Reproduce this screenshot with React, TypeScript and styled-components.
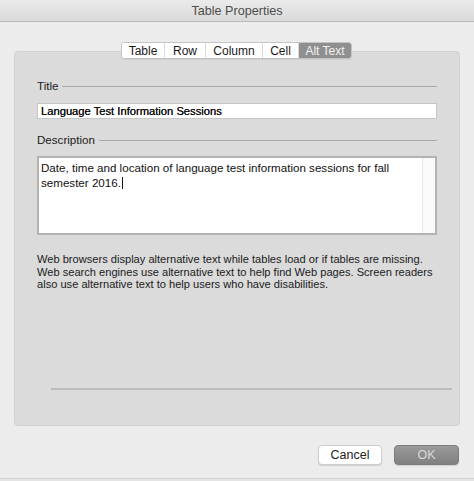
import React from "react";
import styled, { createGlobalStyle } from "styled-components";

const Global = createGlobalStyle`
  html, body { margin: 0; padding: 0; }
  body {
    width: 474px;
    height: 481px;
    overflow: hidden;
    background: #e4e4e4;
    font-family: "Liberation Sans", Arial, sans-serif;
    color: #222;
  }
`;

const Window = styled.div`
  width: 474px;
  height: 478px;
  background: #ececec;
  display: flex;
  flex-direction: column;
  border-bottom: 1px solid #cfcfcf;
`;

const TitleBar = styled.div`
  height: 21px;
  flex: none;
  background: linear-gradient(#ebebeb, #d9d9d9);
  border-bottom: 1px solid #b9b9b9;
  display: flex;
  align-items: center;
  justify-content: center;
  font-size: 12.6px;
  color: #4d4d4d;
`;

const Body = styled.div`
  flex: 1;
  display: flex;
  flex-direction: column;
  padding: 20px 14px 0 14px;
`;

const Tabs = styled.div`
  align-self: flex-start;
  margin-left: 107px;
  display: flex;
  height: 15px;
  border: 1px solid #c4c4c4;
  border-radius: 3px;
  background: #fff;
  overflow: hidden;
  position: relative;
  z-index: 1;
  margin-bottom: -8px;
  box-shadow: 0 1px 0 rgba(0, 0, 0, 0.06);
`;

const Tab = styled.div<{ $w: number; $active?: boolean }>`
  width: ${(p) => p.$w}px;
  box-sizing: border-box;
  display: flex;
  align-items: center;
  justify-content: center;
  font-size: 12px;
  color: ${(p) => (p.$active ? "#f2f2f2" : "#1a1a1a")};
  background: ${(p) => (p.$active ? "#8f8f8f" : "#fff")};
  border-left: 1px solid #dadada;
  &:first-child { border-left: none; }
`;

const Panel = styled.div`
  height: 375px;
  flex: none;
  box-sizing: border-box;
  background: #dbdbdb;
  border: 1px solid #d2d2d2;
  border-radius: 4px;
  padding: 26px 22px 35px 22px;
  display: flex;
  flex-direction: column;
`;

const LabelRow = styled.div`
  display: flex;
  align-items: center;
  gap: 4px;
  height: 14px;
  font-size: 11.6px;
  color: #1a1a1a;
`;

const Rule = styled.div`
  flex: 1;
  height: 1px;
  background: #a9a9a9;
  margin-top: 3px;
`;

const TitleInput = styled.div`
  margin-top: 11px;
  height: 16px;
  box-sizing: border-box;
  background: #fff;
  border: 1px solid #c6c6c6;
  font-size: 11.2px;
  line-height: 14px;
  padding-left: 3px;
  color: #111;
  text-shadow: 0 0 0.4px #111;
`;

const DescLabel = styled(LabelRow)`
  margin-top: 13px;
`;

const TextArea = styled.div`
  margin-top: 10px;
  height: 79px;
  box-sizing: border-box;
  background: #fff;
  border: 2px solid #b3b3b3;
  display: flex;
`;

const AreaText = styled.div`
  flex: 1;
  font-size: 11.6px;
  line-height: 15px;
  padding: 2px 2px 0 2px;
  color: #111;
`;

const Caret = styled.span`
  display: inline-block;
  width: 1px;
  height: 12px;
  background: #111;
  vertical-align: -2px;
  margin-left: 1px;
`;

const ScrollTrack = styled.div`
  width: 12px;
  flex: none;
  background: #fafafa;
  border-left: 1px solid #e6e6e6;
`;

const Help = styled.p`
  margin: 18px 0 0 0;
  font-size: 11.1px;
  line-height: 12.5px;
  color: #1a1a1a;
`;

const Divider = styled.div`
  margin-top: auto;
  margin-left: 14px;
  margin-right: -15px;
  height: 2px;
  background: #bcbcbc;
`;

const Footer = styled.div`
  display: flex;
  justify-content: flex-end;
  gap: 12px;
  margin-top: 19px;
  padding-right: 1px;
`;

const Button = styled.div<{ $w: number; $primary?: boolean }>`
  width: ${(p) => p.$w}px;
  height: 20px;
  box-sizing: border-box;
  border-radius: 4px;
  display: flex;
  align-items: center;
  justify-content: center;
  font-size: 12.5px;
  color: ${(p) => (p.$primary ? "#d9d9d9" : "#222")};
  background: ${(p) =>
    p.$primary ? "linear-gradient(#9a9a9a, #808080)" : "#fff"};
  border: 1px solid ${(p) => (p.$primary ? "#7d7d7d" : "#cdcdcd")};
  box-shadow: 0 1px 1px rgba(0, 0, 0, 0.12);
`;

export default function App() {
  return (
    <>
      <Global />
      <Window>
        <TitleBar>Table Properties</TitleBar>
        <Body>
          <Tabs>
            <Tab $w={42}>Table</Tab>
            <Tab $w={41}>Row</Tab>
            <Tab $w={57}>Column</Tab>
            <Tab $w={36}>Cell</Tab>
            <Tab $w={53} $active>
              Alt Text
            </Tab>
          </Tabs>
          <Panel>
            <LabelRow>
              Title
              <Rule />
            </LabelRow>
            <TitleInput>Language Test Information Sessions</TitleInput>
            <DescLabel>
              Description
              <Rule />
            </DescLabel>
            <TextArea>
              <AreaText>
                Date, time and location of language test information sessions for fall
                semester 2016.
                <Caret />
              </AreaText>
              <ScrollTrack />
            </TextArea>
            <Help>
              Web browsers display alternative text while tables load or if tables are missing.
              Web search engines use alternative text to help find Web pages. Screen readers
              also use alternative text to help users who have disabilities.
            </Help>
            <Divider />
          </Panel>
          <Footer>
            <Button $w={64}>Cancel</Button>
            <Button $w={65} $primary>
              OK
            </Button>
          </Footer>
        </Body>
      </Window>
    </>
  );
}
